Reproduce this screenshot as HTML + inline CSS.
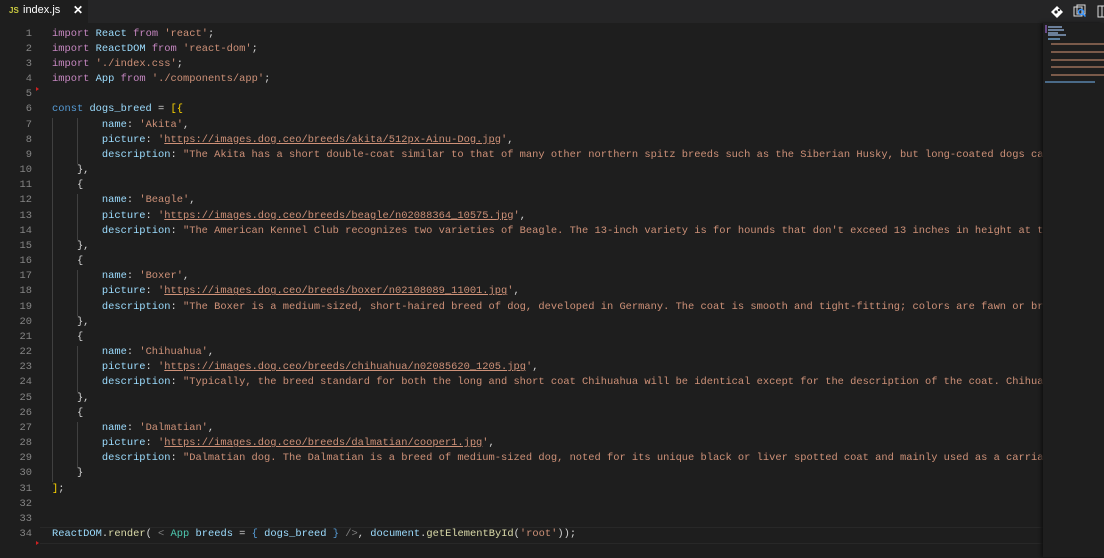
<!DOCTYPE html>
<html><head><meta charset="utf-8">
<style>
html,body{margin:0;padding:0;background:#1e1e1e;width:1104px;height:557px;overflow:hidden;font-family:"Liberation Sans",sans-serif}
#tabbar{position:absolute;left:0;top:0;width:1104px;height:23px;background:#252526}
#tab{position:absolute;left:0;top:0;width:88px;height:23px;background:#1e1e1e;color:#fff;font-size:11px}
#tab .js{position:absolute;left:9px;top:6px;font-size:8px;font-weight:bold;color:#cbcb41}
#tab .nm{position:absolute;left:23px;top:4px}
#tab .x{position:absolute;left:73px;top:3px;font-size:12px;font-weight:bold}
#code{position:absolute;left:0;top:26.5px;width:1043px;height:531px;overflow:hidden;font-family:"Liberation Mono",monospace;font-size:10.4px;color:#d4d4d4}
.l{position:relative;height:15.18px;line-height:15.18px;white-space:pre}
.n{position:absolute;left:0;width:32px;text-align:right;color:#858585}
.c{position:absolute;left:52px}
.k{color:#c586c0}.v{color:#9cdcfe}.s{color:#ce9178}.b{color:#569cd6}.t{color:#4ec9b0}.f{color:#dcdcaa}.y{color:#ffd700}
.u{text-decoration:underline}
.g{position:absolute;width:1px;background:#404040}
#mini{position:absolute;left:1043px;top:23px;width:61px;height:534px;background:#1e1e1e;box-shadow:-2px 0 3px #111}
.m{position:absolute;height:1.5px}
#cur{position:absolute;left:40px;top:527px;width:1003px;height:15px;border-top:1px solid #282828;border-bottom:1px solid #282828}
.red{position:absolute;left:36px;width:0;height:0;border-left:3px solid #c22;border-top:2px solid transparent;border-bottom:2px solid transparent}
</style></head><body>
<div id="tabbar">
 <div id="tab"><span class="js">JS</span><span class="nm">index.js</span><span class="x">✕</span></div>
 <svg style="position:absolute;left:1050px;top:5px" width="14" height="14" viewBox="0 0 14 14"><path d="M7 1L13 7L7 13L1 7Z" fill="#fff"/><circle cx="6" cy="7" r="1.6" fill="#252526"/><circle cx="9" cy="5" r="1.2" fill="#252526"/></svg>
 <svg style="position:absolute;left:1073px;top:4px" width="14" height="14" viewBox="0 0 14 14"><rect x="1" y="3" width="8" height="9" fill="none" stroke="#ddd"/><rect x="4" y="1" width="8" height="9" fill="none" stroke="#ddd"/><circle cx="8" cy="8" r="2.5" fill="none" stroke="#3794ff" stroke-width="1.4"/><path d="M10 10L12.5 12.5" stroke="#3794ff" stroke-width="1.5"/></svg>
 <svg style="position:absolute;left:1097px;top:5px" width="10" height="14" viewBox="0 0 10 14"><rect x="1" y="1" width="10" height="11" fill="none" stroke="#ddd"/><path d="M5 1V12" stroke="#ddd"/></svg>
</div>
<div id="code">
<div class="g" style="left:52px;top:91px;height:364px"></div>
<div class="g" style="left:77px;top:91px;height:46px"></div>
<div class="g" style="left:77px;top:167px;height:46px"></div>
<div class="g" style="left:77px;top:243px;height:46px"></div>
<div class="g" style="left:77px;top:319px;height:46px"></div>
<div class="g" style="left:77px;top:395px;height:46px"></div>
<div class="l"><span class="n">1</span><span class="c"><span class="k">import</span> <span class="v">React</span> <span class="k">from</span> <span class="s">'react'</span>;</span></div>
<div class="l"><span class="n">2</span><span class="c"><span class="k">import</span> <span class="v">ReactDOM</span> <span class="k">from</span> <span class="s">'react-dom'</span>;</span></div>
<div class="l"><span class="n">3</span><span class="c"><span class="k">import</span> <span class="s">'./index.css'</span>;</span></div>
<div class="l"><span class="n">4</span><span class="c"><span class="k">import</span> <span class="v">App</span> <span class="k">from</span> <span class="s">'./components/app'</span>;</span></div>
<div class="l"><span class="n">5</span><span class="c"></span></div>
<div class="l"><span class="n">6</span><span class="c"><span class="b">const</span> <span class="v">dogs_breed</span> = <span class="y">[{</span></span></div>
<div class="l"><span class="n">7</span><span class="c">        <span class="v">name</span>: <span class="s">'Akita'</span>,</span></div>
<div class="l"><span class="n">8</span><span class="c">        <span class="v">picture</span>: <span class="s">'<span class="u">https://images.dog.ceo/breeds/akita/512px-Ainu-Dog.jpg</span>'</span>,</span></div>
<div class="l"><span class="n">9</span><span class="c">        <span class="v">description</span>: <span class="s">"The Akita has a short double-coat similar to that of many other northern spitz breeds such as the Siberian Husky, but long-coated dogs can</span></span></div>
<div class="l"><span class="n">10</span><span class="c">    },</span></div>
<div class="l"><span class="n">11</span><span class="c">    {</span></div>
<div class="l"><span class="n">12</span><span class="c">        <span class="v">name</span>: <span class="s">'Beagle'</span>,</span></div>
<div class="l"><span class="n">13</span><span class="c">        <span class="v">picture</span>: <span class="s">'<span class="u">https://images.dog.ceo/breeds/beagle/n02088364_10575.jpg</span>'</span>,</span></div>
<div class="l"><span class="n">14</span><span class="c">        <span class="v">description</span>: <span class="s">"The American Kennel Club recognizes two varieties of Beagle. The 13-inch variety is for hounds that don't exceed 13 inches in height at the</span></span></div>
<div class="l"><span class="n">15</span><span class="c">    },</span></div>
<div class="l"><span class="n">16</span><span class="c">    {</span></div>
<div class="l"><span class="n">17</span><span class="c">        <span class="v">name</span>: <span class="s">'Boxer'</span>,</span></div>
<div class="l"><span class="n">18</span><span class="c">        <span class="v">picture</span>: <span class="s">'<span class="u">https://images.dog.ceo/breeds/boxer/n02108089_11001.jpg</span>'</span>,</span></div>
<div class="l"><span class="n">19</span><span class="c">        <span class="v">description</span>: <span class="s">"The Boxer is a medium-sized, short-haired breed of dog, developed in Germany. The coat is smooth and tight-fitting; colors are fawn or brindled</span></span></div>
<div class="l"><span class="n">20</span><span class="c">    },</span></div>
<div class="l"><span class="n">21</span><span class="c">    {</span></div>
<div class="l"><span class="n">22</span><span class="c">        <span class="v">name</span>: <span class="s">'Chihuahua'</span>,</span></div>
<div class="l"><span class="n">23</span><span class="c">        <span class="v">picture</span>: <span class="s">'<span class="u">https://images.dog.ceo/breeds/chihuahua/n02085620_1205.jpg</span>'</span>,</span></div>
<div class="l"><span class="n">24</span><span class="c">        <span class="v">description</span>: <span class="s">"Typically, the breed standard for both the long and short coat Chihuahua will be identical except for the description of the coat. Chihuahuas</span></span></div>
<div class="l"><span class="n">25</span><span class="c">    },</span></div>
<div class="l"><span class="n">26</span><span class="c">    {</span></div>
<div class="l"><span class="n">27</span><span class="c">        <span class="v">name</span>: <span class="s">'Dalmatian'</span>,</span></div>
<div class="l"><span class="n">28</span><span class="c">        <span class="v">picture</span>: <span class="s">'<span class="u">https://images.dog.ceo/breeds/dalmatian/cooper1.jpg</span>'</span>,</span></div>
<div class="l"><span class="n">29</span><span class="c">        <span class="v">description</span>: <span class="s">"Dalmatian dog. The Dalmatian is a breed of medium-sized dog, noted for its unique black or liver spotted coat and mainly used as a carriage dog</span></span></div>
<div class="l"><span class="n">30</span><span class="c">    }</span></div>
<div class="l"><span class="n">31</span><span class="c"><span class="y">]</span>;</span></div>
<div class="l"><span class="n">32</span><span class="c"></span></div>
<div class="l"><span class="n">33</span><span class="c"></span></div>
<div class="l"><span class="n">34</span><span class="c"><span class="v">ReactDOM</span>.<span class="f">render</span>( <span style="color:#808080">&lt;</span> <span class="t">App</span> <span class="v">breeds</span> = <span class="b">{</span> <span class="v">dogs_breed</span> <span class="b">}</span> <span style="color:#808080">/&gt;</span>, <span class="v">document</span>.<span class="f">getElementById</span>(<span class="s">'root'</span>));</span></div>
</div>
<div id="cur"></div>
<div class="red" style="top:87px"></div>
<div class="red" style="top:541px"></div>
<div id="mini">
 <div class="m" style="left:2px;top:2px;width:2px;height:8px;background:#6a4a8a"></div>
 <div class="m" style="left:5px;top:3px;width:14px;background:#6b7f9a"></div>
 <div class="m" style="left:5px;top:6px;width:16px;background:#6b7f9a"></div>
 <div class="m" style="left:5px;top:9px;width:10px;background:#6b7f9a"></div>
 <div class="m" style="left:5px;top:11px;width:18px;background:#6b7f9a"></div>
 <div class="m" style="left:5px;top:15px;width:12px;background:#5b7fa0"></div>
 <div class="m" style="left:8px;top:20px;width:53px;background:#7a5a4a"></div>
 <div class="m" style="left:8px;top:28px;width:53px;background:#7a5a4a"></div>
 <div class="m" style="left:8px;top:36px;width:53px;background:#7a5a4a"></div>
 <div class="m" style="left:8px;top:43px;width:53px;background:#7a5a4a"></div>
 <div class="m" style="left:8px;top:51px;width:53px;background:#7a5a4a"></div>
 <div class="m" style="left:2px;top:58px;width:50px;background:#4a6a88"></div>
</div>
</body></html>
